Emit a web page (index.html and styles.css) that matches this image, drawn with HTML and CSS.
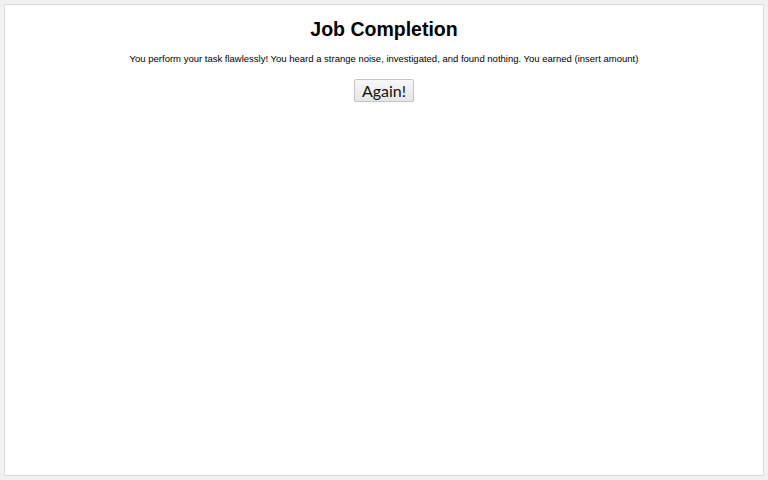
FILE: index.html
```html
<!doctype html>
<html lang="en">
<head>
    <meta charset="UTF-8">
    <title>Job Completion</title>
    <link rel="stylesheet" href="styles.css">
</head>
<body>
<div class="panel">
    <h1 class="panel-title">Job Completion</h1>
    <p class="panel-text">You perform your task flawlessly! You heard a strange noise, investigated, and found nothing. You earned (insert amount)</p>
    <button class="panel-btn" type="button">Again!</button>
</div>
</body>
</html>
```

FILE: styles.css
```css
* {
    margin: 0;
    padding: 0;
    box-sizing: border-box;
}
html, body {
    height: 100%;
}
body {
    background: #f2f2f2;
    padding: 4px 4px 4px 4px;
    font-family: "Liberation Sans", Arial, sans-serif;
    color: #000;
}
.panel {
    height: 472px;
    background: #fff;
    border: 1px solid #dcdcdc;
    display: flex;
    flex-direction: column;
    align-items: center;
    padding-top: 12px;
}
.panel-title {
    font-size: 19.5px;
    font-weight: bold;
    line-height: 24px;
}
.panel-text {
    font-size: 9.5px;
    line-height: 14px;
    margin-top: 11px;
}
.panel-btn {
    margin-top: 13px;
    font-family: Lato, sans-serif;
    font-size: 16px;
    line-height: 20px;
    padding: 0 7px;
    height: 23px;
    color: #111;
    background: linear-gradient(#f7f7f7, #e6e6e6);
    border: 1px solid #c4c4c4;
    border-radius: 2px;
}
```
